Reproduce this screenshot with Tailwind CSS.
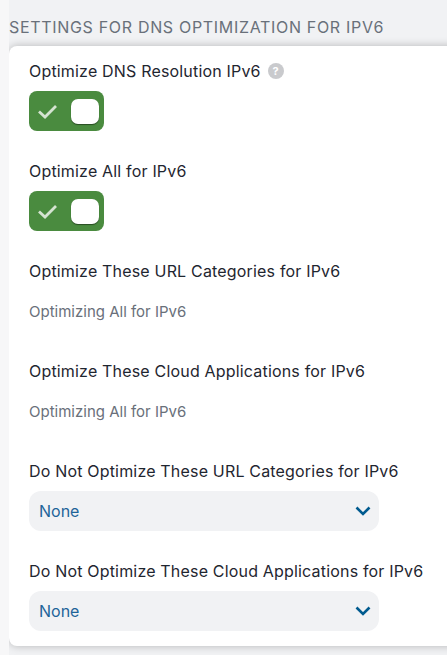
<!DOCTYPE html>
<html lang="en">
  <head>
    <meta charset="UTF-8" />
    <title>DNS Optimization</title>
    <script src="https://cdn.jsdelivr.net/npm/@tailwindcss/browser@4"></script>
  </head>
  <body class="h-[655px] overflow-hidden bg-[#f7f7f8] font-['Inter',sans-serif]">
    <div class="ml-[9px] h-full overflow-hidden bg-[#f1f2f4]">
      <h2 class="h-[46px] pt-[17px] text-[16px] leading-[20px] tracking-[0.68px] text-[#69707a] whitespace-nowrap">SETTINGS FOR DNS OPTIMIZATION FOR IPV6</h2>

      <!-- Card -->
      <div class="h-[600px] w-[460px] rounded-l-[8px] bg-white pl-[20px] pt-[15px] shadow-[0_0_8px_rgba(0,0,0,0.25)]">
        <!-- DNS resolution -->
        <div class="flex h-[20px] items-center gap-[7px] text-[16px] leading-[20px] tracking-[0.18px] text-[#1f2630]">
          Optimize DNS Resolution IPv6
          <span class="flex h-4 w-4 items-center justify-center rounded-full bg-[#c9cacd] text-[11px] font-bold text-white">?</span>
        </div>
        <div class="mt-[10px] flex h-[40px] w-[75px] items-center rounded-[8px] bg-[#4a8b3f] pl-[9px]">
          <svg class="h-[20px] w-[20px]" viewBox="0 0 20 20" fill="none" stroke="#d5e3d1" stroke-width="2.8">
            <path d="M1 10.5l6 5.5L18 5" />
          </svg>
          <div class="ml-[13px] h-[25px] w-[28px] rounded-[7px] bg-white shadow-[0_1px_1px_rgba(0,0,0,0.45)]"></div>
        </div>

        <!-- All -->
        <div class="mt-[30px] h-[20px] text-[16px] leading-[20px] tracking-[0.18px] text-[#1f2630]">Optimize All for IPv6</div>
        <div class="mt-[10px] flex h-[40px] w-[75px] items-center rounded-[8px] bg-[#4a8b3f] pl-[9px]">
          <svg class="h-[20px] w-[20px]" viewBox="0 0 20 20" fill="none" stroke="#d5e3d1" stroke-width="2.8">
            <path d="M1 10.5l6 5.5L18 5" />
          </svg>
          <div class="ml-[13px] h-[25px] w-[28px] rounded-[7px] bg-white shadow-[0_1px_1px_rgba(0,0,0,0.45)]"></div>
        </div>

        <!-- URL categories -->
        <div class="mt-[30px] h-[20px] text-[16px] leading-[20px] tracking-[0.18px] text-[#1f2630]">Optimize These URL Categories for IPv6</div>
        <div class="mt-[20px] h-[20px] text-[15px] leading-[22px] text-[#69707a]">Optimizing All for IPv6</div>

        <!-- Cloud apps -->
        <div class="mt-[40px] h-[20px] text-[16px] leading-[20px] tracking-[0.18px] text-[#1f2630]">Optimize These Cloud Applications for IPv6</div>
        <div class="mt-[20px] h-[20px] text-[15px] leading-[22px] text-[#69707a]">Optimizing All for IPv6</div>

        <!-- Excluded URL categories -->
        <div class="mt-[40px] h-[20px] text-[16px] leading-[20px] tracking-[0.18px] text-[#1f2630]">Do Not Optimize These URL Categories for IPv6</div>
        <div class="mt-[10px] flex h-[40px] w-[350px] items-center justify-between rounded-[12px] bg-[#f1f2f4] pl-[10px] pr-[8px] text-[16px] text-[#1e6499]">
          None
          <svg class="h-[14px] w-[16px]" viewBox="0 0 16 14" fill="none" stroke="#005b8f" stroke-width="2.6">
            <path d="M1.5 3.5L8 10l6.5-6.5" />
          </svg>
        </div>

        <!-- Excluded cloud apps -->
        <div class="mt-[30px] h-[20px] text-[16px] leading-[20px] tracking-[0.18px] text-[#1f2630] whitespace-nowrap">Do Not Optimize These Cloud Applications for IPv6</div>
        <div class="mt-[10px] flex h-[40px] w-[350px] items-center justify-between rounded-[12px] bg-[#f1f2f4] pl-[10px] pr-[8px] text-[16px] text-[#1e6499]">
          None
          <svg class="h-[14px] w-[16px]" viewBox="0 0 16 14" fill="none" stroke="#005b8f" stroke-width="2.6">
            <path d="M1.5 3.5L8 10l6.5-6.5" />
          </svg>
        </div>
      </div>
    </div>
  </body>
</html>
